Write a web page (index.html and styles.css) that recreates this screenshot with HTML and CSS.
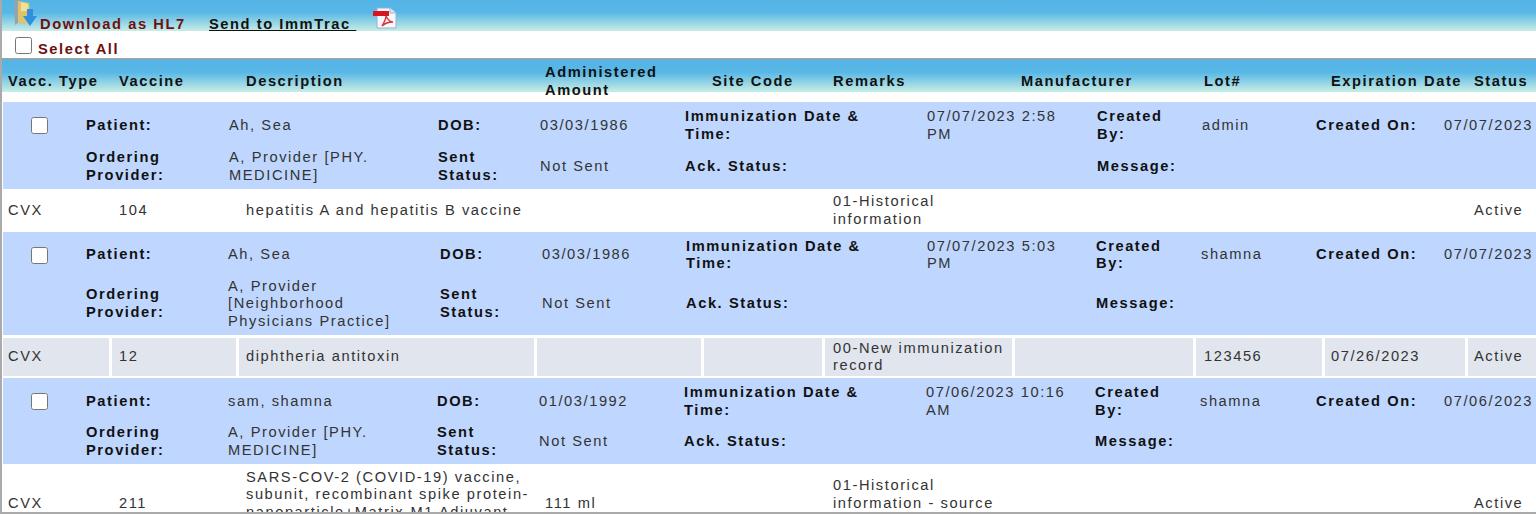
FILE: index.html
```html
<!DOCTYPE html>
<html>
<head>
    <meta charset="UTF-8">
    <title>Immunization List</title>
    <link rel="stylesheet" href="styles.css">
</head>
<body>
<div class="frame">
    <div class="toolbar">
        <svg class="icon-download" width="23" height="28" viewBox="0 0 23 28">
            <path d="M0 2 L5 0 L5 23 L1 26 Z" fill="#98a3a8"/>
            <path d="M4 2 L15 4 L16 12 L16 25 L4 24 Z" fill="#dcc46a"/>
            <path d="M7 3 L14 5 L14 12 L7 12 Z" fill="#efe09c"/>
            <path d="M13 10 H19 V17 H23 L16 27 L9 17 H13 Z" fill="#2f8fe0"/>
        </svg>
        <a class="download-link">Download as HL7</a>
        <a class="send-link">Send to ImmTrac&nbsp;</a>
        <svg class="icon-pdf" width="24" height="22" viewBox="0 0 24 22">
            <path d="M4 1 H17 L23 6 V21 H4 Z" fill="#f4f7fb" stroke="#9fb0cf" stroke-width="1"/>
            <path d="M17 1 V6 H23" fill="#dfe6f2" stroke="#9fb0cf" stroke-width="1"/>
            <rect x="0" y="4" width="16" height="5" fill="#d9141c"/>
            <path d="M9 19 C12 14 13 10 13 9 C15 13 17 15 20 15 C16 15 12 16 9 19 Z" fill="none" stroke="#e0303a" stroke-width="1.4"/>
        </svg>
    </div>
    <div class="select-bar">
        <input type="checkbox" class="check-all">
        <label>Select All</label>
    </div>
    <div class="head-row">
        <div>Vacc. Type</div>
        <div>Vaccine</div>
        <div>Description</div>
        <div>Administered Amount</div>
        <div>Site Code</div>
        <div>Remarks</div>
        <div>Manufacturer</div>
        <div>Lot#</div>
        <div class="no-wrap">Expiration Date</div>
        <div>Status</div>
    </div>

    <div class="info-row info-a">
        <div class="check-cell"><input type="checkbox"></div>
        <div class="lbl">Patient:</div>
        <div class="val">Ah, Sea</div>
        <div class="lbl">DOB:</div>
        <div class="val">03/03/1986</div>
        <div class="lbl lbl-date">Immunization Date &amp; Time:</div>
        <div class="val val-date">07/07/2023 2:58 PM</div>
        <div class="lbl">Created By:</div>
        <div class="val">admin</div>
        <div class="lbl no-wrap">Created On:</div>
        <div class="val no-wrap">07/07/2023</div>
        <div></div>
        <div class="lbl">Ordering Provider:</div>
        <div class="val">A, Provider [PHY. MEDICINE]</div>
        <div class="lbl">Sent Status:</div>
        <div class="val">Not Sent</div>
        <div class="lbl">Ack. Status:</div>
        <div class="val"></div>
        <div class="lbl">Message:</div>
    </div>
    <div class="data-row row-first">
        <div>CVX</div>
        <div>104</div>
        <div>hepatitis A and hepatitis B vaccine</div>
        <div></div>
        <div></div>
        <div>01-Historical information</div>
        <div></div>
        <div></div>
        <div></div>
        <div>Active</div>
    </div>

    <div class="info-row info-b">
        <div class="check-cell"><input type="checkbox"></div>
        <div class="lbl">Patient:</div>
        <div class="val">Ah, Sea</div>
        <div class="lbl">DOB:</div>
        <div class="val">03/03/1986</div>
        <div class="lbl lbl-date">Immunization Date &amp; Time:</div>
        <div class="val val-date">07/07/2023 5:03 PM</div>
        <div class="lbl">Created By:</div>
        <div class="val">shamna</div>
        <div class="lbl no-wrap">Created On:</div>
        <div class="val no-wrap">07/07/2023</div>
        <div></div>
        <div class="lbl">Ordering Provider:</div>
        <div class="val">A, Provider [Neighborhood Physicians Practice]</div>
        <div class="lbl">Sent Status:</div>
        <div class="val">Not Sent</div>
        <div class="lbl">Ack. Status:</div>
        <div class="val"></div>
        <div class="lbl">Message:</div>
    </div>
    <div class="data-row row-grey">
        <div>CVX</div>
        <div>12</div>
        <div>diphtheria antitoxin</div>
        <div></div>
        <div></div>
        <div>00-New immunization record</div>
        <div></div>
        <div>123456</div>
        <div>07/26/2023</div>
        <div>Active</div>
    </div>

    <div class="info-row info-c">
        <div class="check-cell"><input type="checkbox"></div>
        <div class="lbl">Patient:</div>
        <div class="val">sam, shamna</div>
        <div class="lbl">DOB:</div>
        <div class="val">01/03/1992</div>
        <div class="lbl lbl-date">Immunization Date &amp; Time:</div>
        <div class="val val-date">07/06/2023 10:16 AM</div>
        <div class="lbl">Created By:</div>
        <div class="val">shamna</div>
        <div class="lbl no-wrap">Created On:</div>
        <div class="val no-wrap">07/06/2023</div>
        <div></div>
        <div class="lbl">Ordering Provider:</div>
        <div class="val">A, Provider [PHY. MEDICINE]</div>
        <div class="lbl">Sent Status:</div>
        <div class="val">Not Sent</div>
        <div class="lbl">Ack. Status:</div>
        <div class="val"></div>
        <div class="lbl">Message:</div>
    </div>
    <div class="data-row row-last">
        <div>CVX</div>
        <div>211</div>
        <div>SARS-COV-2 (COVID-19) vaccine, subunit, recombinant spike protein-nanoparticle+Matrix-M1 Adjuvant, preservative free</div>
        <div>111 ml</div>
        <div></div>
        <div>01-Historical information - source unspecified</div>
        <div></div>
        <div></div>
        <div></div>
        <div>Active</div>
    </div>
</div>
</body>
</html>
```

FILE: styles.css
```css
html, body {
    margin: 0;
    padding: 0;
    background-color: #fff;
}
body {
    font-family: "Liberation Sans", Arial, sans-serif;
    font-size: 14.67px;
    line-height: 17.5px;
    letter-spacing: 1.57px;
    color: #333;
}
.frame {
    height: 512px;
    overflow: hidden;
    border-left: 2px solid #aaa;
    border-bottom: 2px solid #aaa;
}
.no-wrap {
    white-space: nowrap;
}
.toolbar {
    display: flex;
    align-items: flex-end;
    height: 31px;
    background: linear-gradient(#53b4e6 0%, #58b7e6 40%, #c8ede4 100%);
    font-weight: bold;
    white-space: nowrap;
}
.icon-download {
    margin: 0 3px 4px 12px;
    flex-shrink: 0;
}
.download-link {
    color: #6d1010;
    width: 169px;
    margin-bottom: -2px;
}
.send-link {
    color: #111;
    text-decoration: underline;
    width: 164px;
    margin-bottom: -2px;
}
.icon-pdf {
    margin-bottom: 2px;
}
.select-bar {
    display: flex;
    align-items: flex-end;
    height: 28px;
    border-bottom: 1px solid #c49a7c;
    box-sizing: border-box;
    font-weight: bold;
    color: #6d1010;
}
.check-all {
    width: 17px;
    height: 17px;
    margin: 0 6px 4px 13px;
}
.head-row, .data-row {
    display: grid;
    grid-template-columns: 106px 124px 295px 164px 118px 187px 178px 126px 140px 1fr;
    column-gap: 3px;
    padding-left: 1px;
}
.head-row {
    height: 41px;
    padding-top: 2px;
    align-items: center;
    font-weight: bold;
    color: #111;
    background: linear-gradient(#53b4e6 0%, #58b7e6 40%, #c8ede4 100%) no-repeat;
    background-size: 100% 33px;
}
.head-row > div, .data-row > div {
    padding: 0 7px;
}
.head-row > div:nth-child(3), .data-row > div:nth-child(3) {
    padding-right: 0;
}
.head-row > div:nth-child(4), .data-row > div:nth-child(4),
.head-row > div:nth-child(5), .data-row > div:nth-child(5),
.head-row > div:nth-child(6), .data-row > div:nth-child(6),
.head-row > div:nth-child(8), .data-row > div:nth-child(8) {
    padding-left: 8px;
}
.head-row > div:nth-child(7), .data-row > div:nth-child(7),
.head-row > div:nth-child(9), .data-row > div:nth-child(9),
.head-row > div:nth-child(10), .data-row > div:nth-child(10) {
    padding-left: 6px;
}
.head-row > div:first-child, .data-row > div:first-child {
    padding: 0 0 0 5px;
}
.data-row > div {
    display: flex;
    align-items: center;
}
.row-first {
    height: 43px;
}
.row-grey {
    height: 38px;
    margin: 3.5px 0 2px;
}
.row-grey > div {
    background-color: #e0e5ee;
}
.row-last {
    height: 79px;
}
.info-row {
    display: grid;
    margin-left: 1px;
    background-color: #bfd7fe;
    align-items: center;
}
.info-a {
    grid-template-columns: 83px 143px 209px 102px 145px 242px 170px 105px 114px 128px 1fr;
    row-gap: 6px;
    padding: 6px 0 5px;
}
.info-b {
    grid-template-columns: 83px 142px 212px 102px 144px 241px 169px 105px 115px 128px 1fr;
    row-gap: 5px;
    padding: 5.5px 0 4.5px;
}
.info-c {
    grid-template-columns: 83px 142px 209px 102px 145px 242px 169px 105px 116px 128px 1fr;
    row-gap: 5px;
    padding: 6px 0 5px;
}
.lbl {
    font-weight: bold;
    color: #111;
    padding-right: 14px;
}
.lbl-date {
    padding-right: 50px;
}
.val {
    padding-right: 40px;
}
.val-date {
    padding-right: 22px;
}
.check-cell {
    display: flex;
    padding-left: 28px;
}
.check-cell input {
    width: 17px;
    height: 17px;
    margin: 0;
}
```
